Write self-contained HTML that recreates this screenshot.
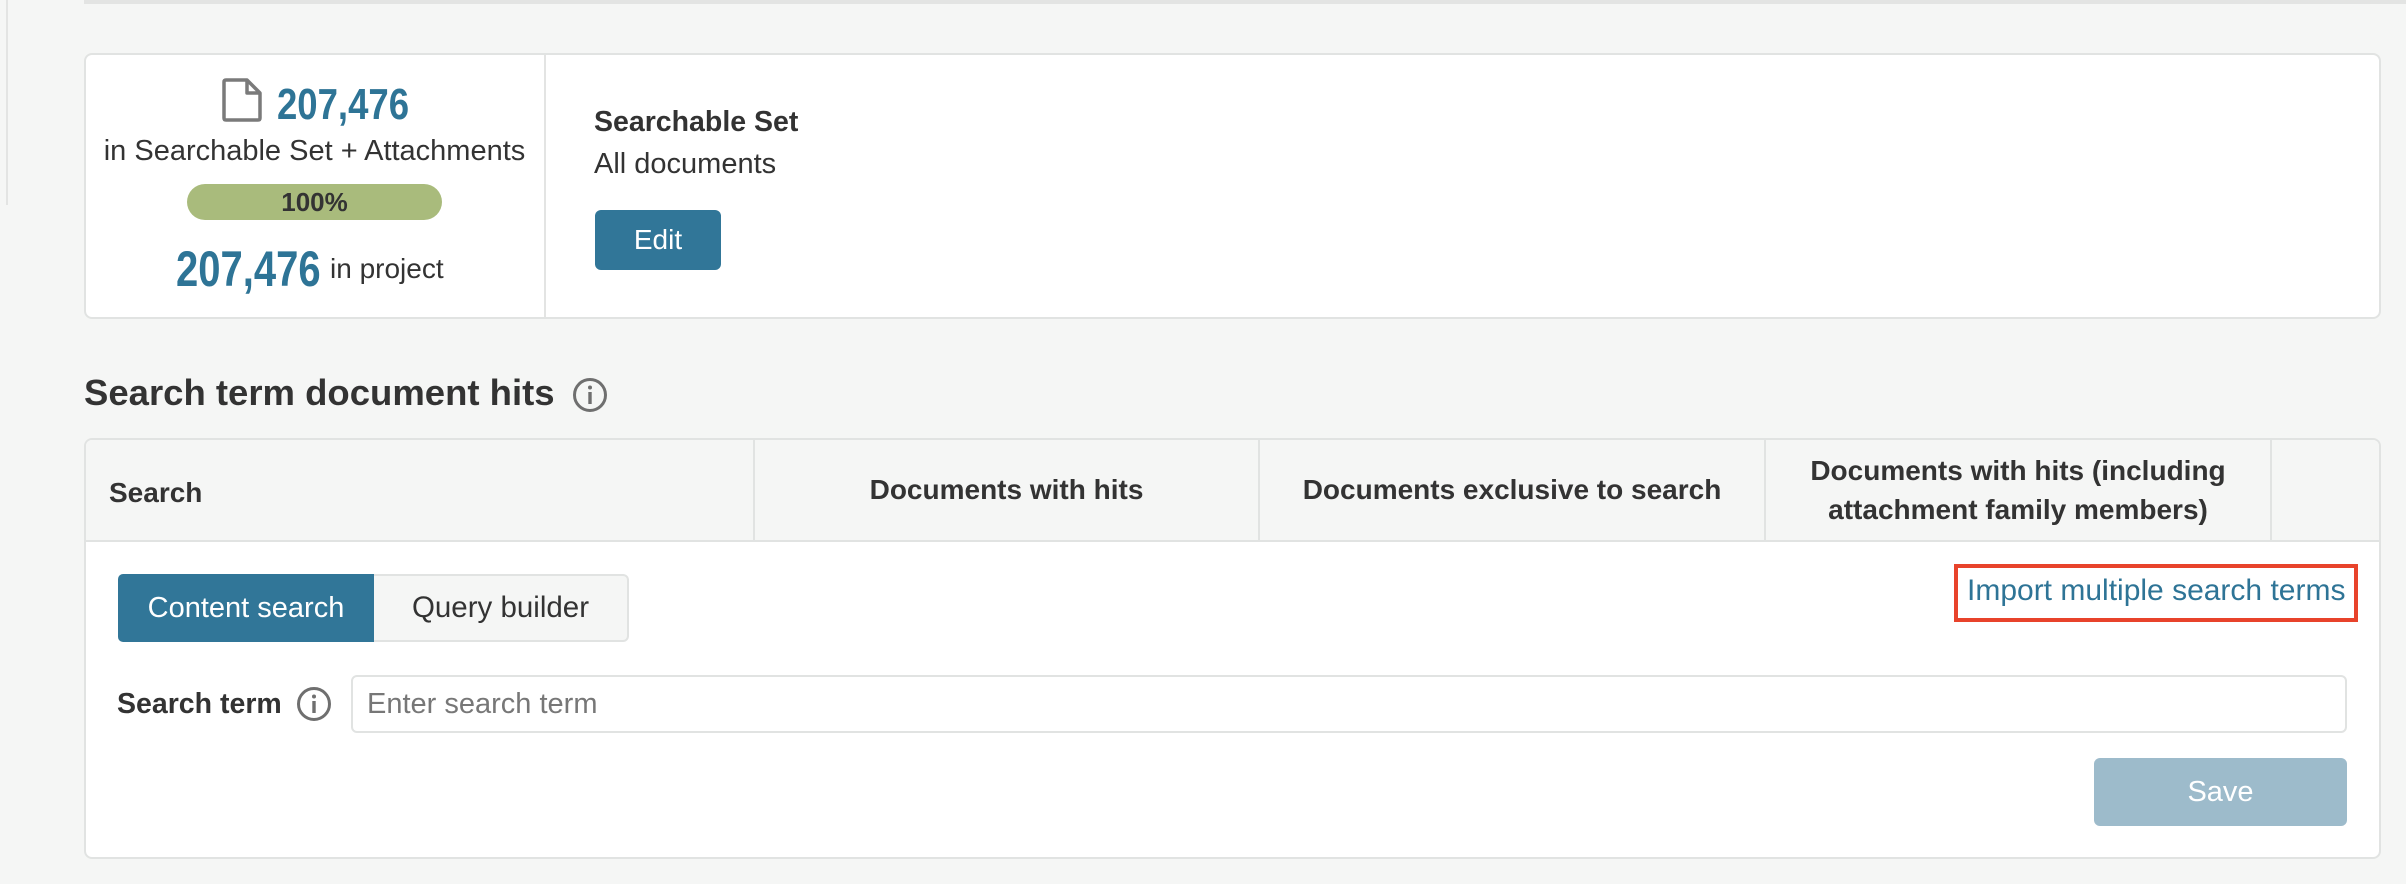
<!DOCTYPE html>
<html><head><meta charset="utf-8"><style>
*{margin:0;padding:0;box-sizing:border-box}
body{width:2406px;height:884px;background:#f5f6f5;font-family:"Liberation Sans",sans-serif;color:#333;position:relative;overflow:hidden}
.a{position:absolute}
.card{background:#fff;border:2px solid #e1e3e2;border-radius:8px}
.num{color:#2e7496;font-weight:bold;display:inline-block;transform-origin:left top;white-space:nowrap}
.t{white-space:nowrap}
</style></head><body>
<div class="a" style="left:84px;top:0;width:2322px;height:4px;background:#e3e4e3"></div>
<div class="a" style="left:6px;top:0;width:2px;height:205px;background:#e3e4e3"></div>

<div class="a card" style="left:84px;top:53px;width:2297px;height:266px"></div>
<div class="a" style="left:544px;top:55px;width:2px;height:262px;background:#e3e4e3"></div>
<svg class="a" style="left:222px;top:78px" width="40" height="44" viewBox="0 0 40 44"><path d="M4 2 H25 L38 15 V40 Q38 42 36 42 H4 Q2 42 2 40 V4 Q2 2 4 2 Z M25 2 V15 H38" fill="none" stroke="#7a7a7a" stroke-width="3.5" stroke-linejoin="round"/></svg>
<div class="a num" style="left:277px;top:80px;font-size:44px;transform:scaleX(0.83)">207,476</div>
<div class="a t" style="left:94px;top:135px;font-size:29px;width:441px;text-align:center">in Searchable Set + Attachments</div>
<div class="a" style="left:187px;top:184px;width:255px;height:36px;border-radius:18px;background:#a9bb7c;text-align:center;font-weight:bold;font-size:26px;line-height:36px;color:#333">100%</div>
<div class="a num" style="left:176px;top:240px;font-size:50px;transform:scaleX(0.8)">207,476</div>
<div class="a t" style="left:330px;top:253px;font-size:28px">in project</div>

<div class="a t" style="left:594px;top:106px;font-size:28.5px;font-weight:bold">Searchable Set</div>
<div class="a t" style="left:594px;top:148px;font-size:29px">All documents</div>
<div class="a" style="left:595px;top:210px;width:126px;height:60px;background:#317698;border-radius:6px;color:#fff;font-size:28px;line-height:60px;text-align:center">Edit</div>

<div class="a t" style="left:84px;top:372px;font-size:36.5px;font-weight:bold;color:#333">Search term document hits</div>
<svg class="a" style="left:572px;top:377px" width="36" height="36" viewBox="0 0 36 36"><circle cx="18" cy="18" r="15.5" fill="none" stroke="#6f6f6f" stroke-width="3"/><circle cx="18" cy="10.5" r="2" fill="#6f6f6f"/><rect x="16.3" y="15" width="3.4" height="12" fill="#6f6f6f"/></svg>

<div class="a card" style="left:84px;top:438px;width:2297px;height:421px;overflow:hidden">
  <div class="a" style="left:0;top:0;width:2297px;height:102px;background:#f5f6f5;border-bottom:2px solid #e1e3e2"></div>
</div>
<div class="a" style="left:753px;top:440px;width:2px;height:100px;background:#e1e3e2"></div>
<div class="a" style="left:1258px;top:440px;width:2px;height:100px;background:#e1e3e2"></div>
<div class="a" style="left:1764px;top:440px;width:2px;height:100px;background:#e1e3e2"></div>
<div class="a" style="left:2270px;top:440px;width:2px;height:100px;background:#e1e3e2"></div>
<div class="a t" style="left:109px;top:477px;font-size:28px;font-weight:bold">Search</div>
<div class="a t" style="left:755px;top:474px;width:503px;text-align:center;font-size:28px;font-weight:bold">Documents with hits</div>
<div class="a t" style="left:1260px;top:474px;width:504px;text-align:center;font-size:28px;font-weight:bold">Documents exclusive to search</div>
<div class="a t" style="left:1766px;top:451px;width:504px;text-align:center;font-size:28px;font-weight:bold;line-height:39px">Documents with hits (including<br>attachment family members)</div>

<div class="a" style="left:118px;top:574px;width:256px;height:68px;background:#317698;border-radius:5px 0 0 5px;color:#fff;font-size:29px;line-height:68px;text-align:center">Content search</div>
<div class="a" style="left:374px;top:574px;width:255px;height:68px;background:#f5f6f5;border:2px solid #e1e3e2;border-left:none;border-radius:0 6px 6px 0;font-size:29.5px;line-height:64px;text-align:center;color:#333">Query builder</div>

<div class="a" style="left:1954px;top:564px;width:404px;height:58px;border:4px solid #e8432b"></div>
<div class="a t" style="left:1967px;top:574px;font-size:30px;color:#2e7496">Import multiple search terms</div>

<div class="a t" style="left:117px;top:688px;font-size:28.5px;font-weight:bold">Search term</div>
<svg class="a" style="left:296px;top:686px" width="36" height="36" viewBox="0 0 36 36"><circle cx="18" cy="18" r="15.5" fill="none" stroke="#6f6f6f" stroke-width="3"/><circle cx="18" cy="10.5" r="2" fill="#6f6f6f"/><rect x="16.3" y="15" width="3.4" height="12" fill="#6f6f6f"/></svg>
<div class="a" style="left:351px;top:675px;width:1996px;height:58px;border:2px solid #e1e3e2;border-radius:6px;background:#fff;font-size:29px;line-height:54px;padding-left:14px;color:#777">Enter search term</div>

<div class="a" style="left:2094px;top:758px;width:253px;height:68px;background:#9dbbcb;border-radius:6px;color:#fff;font-size:29px;line-height:68px;text-align:center">Save</div>
</body></html>
